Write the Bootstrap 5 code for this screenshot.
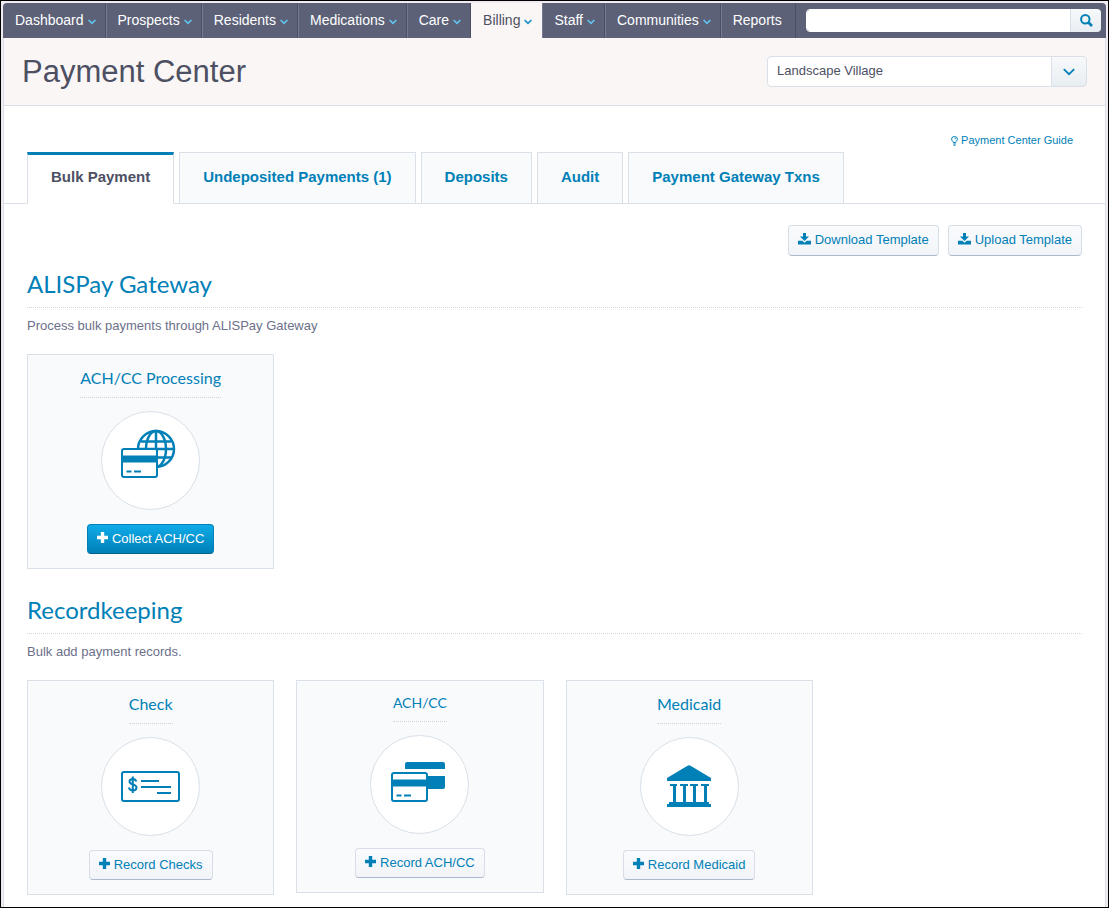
<!DOCTYPE html>
<html lang="en">
<head>
<meta charset="utf-8">
<meta name="viewport" content="width=device-width, initial-scale=1">
<title>Payment Center</title>
<link href="https://cdn.jsdelivr.net/npm/bootstrap@5.3.0/dist/css/bootstrap.min.css" rel="stylesheet">
<style>
:root { --ink:#4d5063; --blue:#0080b7; --line:#d9e0e8; --bar:#5c6178; }
body { font-family:"Liberation Sans", Arial, sans-serif; font-size:13px; line-height:20px; color:#6c708a; }
a { color:var(--blue); text-decoration:none; }
.frame { min-height:100vh; border:1px solid #000; padding:2px 2px 0; background:#f1ecf2; }
.panel { flex:1; background:#fff; border-right:1px solid var(--line); border-left:1px solid var(--line); border-radius:4px 4px 0 0; }
.mainbar { margin:0 -1px; background:var(--bar); border-radius:4px 4px 0 0; min-height:35px; }
.mainbar .menu-link { display:flex; align-items:center; gap:4px; height:35px; padding:0 9px 2px 11px; font-size:14px; color:#fff; border-right:1px solid #4b4f64; border-left:1px solid #737990; white-space:nowrap; }
.mainbar li:first-child .menu-link { border-left-color:transparent; }
.mainbar li:last-child .menu-link { padding-right:13px; }
.menu-link svg { fill:none; stroke:#62c4f0; stroke-width:1.600; margin-top:4px; }
.mainbar .menu-link.active { background:#faf6f5; color:var(--ink); border-color:#faf6f5; }
.menu-link.active svg { stroke:#1590c6; }
.search { margin:6px 5px 6px 10px; flex:1; height:23px; }
.search input { min-height:0; height:23px; padding:0 8px; border:1px solid #fff; border-radius:4px; font-size:13px; }
.search button { width:31px; height:23px; padding:0; line-height:0; background:linear-gradient(#f7f9fb,#e9eef2); border:0; border-left:1px solid var(--line); border-radius:4px; }
.pagehead { background:#faf6f5; border-bottom:1px solid var(--line); padding:0 18px; height:68px; }
.pagehead h1 { font-size:31px; line-height:40px; color:var(--ink); font-weight:400; }
.picker { width:320px; height:31px; }
.picker select { height:31px; padding:0 9px 2px; font-size:13px; color:var(--ink); border:1px solid var(--line); border-radius:4px; background-image:none; }
.picker label { width:36px; padding:0; justify-content:center; background:linear-gradient(#f7f9fb,#e9eef2); border:1px solid var(--line); border-radius:4px; }
.guide { padding:24px 32px 2px; font-size:11px; }
.tabs { gap:5px; padding:0 23px; border-bottom:1px solid var(--line); }
.tabs button { height:52px; margin-bottom:-1px; padding:0 23px 3px; border:1px solid var(--line); background:#f8fafc; color:var(--blue); font-size:15px; font-weight:700; white-space:nowrap; }
.tabs button.active { background:#fff; color:var(--ink); border-top:3px solid var(--blue); border-bottom-color:#fff; padding-bottom:5px; }
.content { padding:21px 23px 12px; }
.btn-soft, .btn-go { display:inline-flex; align-items:center; gap:4px; height:30px; padding:0 9px 1px; font-size:13px; line-height:20px; border-radius:4px; }
.btn-soft { color:var(--blue); background:linear-gradient(#fafbfd,#f2f4f8); border:1px solid #d7dee8; border-bottom-color:#adb9cc; }
.btn-soft:hover { color:#00618c; background:#eef2f6; }
.btn-go { color:#fff; background:linear-gradient(#0fabe8,#0080b8); border:1px solid #0080b7; border-bottom-color:#00618c; }
.btn-go:hover { color:#fff; background:#0080b7; }
.btn-soft svg, .btn-go svg { fill:currentColor; margin-top:-3px; }
.tools { gap:9px; }
.tools .btn-soft { height:31px; }
.section-title { font-family:Lato, sans-serif; font-size:24px; line-height:28px; color:var(--blue); font-weight:400; padding-bottom:9px; margin:14px 0 8px; border-bottom:1px dotted #d3d6da; }
.records .section-title { margin-top:27px; }
.summary { margin-bottom:18px; }
.tiles { --bs-gutter-x:22px; }
.tile { border:1px solid var(--line); background:#f8fafc; padding:13px 10px 14px; text-align:center; }
.tile h3 { display:inline-block; font-family:Lato, sans-serif; font-size:16px; line-height:20px; color:var(--blue); font-weight:400; padding-bottom:9px; margin:0 0 13px; border-bottom:1px dotted #cfd3d8; vertical-align:top; }
.tile h3.compact { font-size:14px; line-height:18px; }
.disc { width:99px; height:99px; margin:0 auto 14px; border:1px solid var(--line); border-radius:50%; background:#fff; }
.disc svg { display:block; fill:none; stroke:var(--blue); }
</style>
</head>
<body>
<svg class="d-none" aria-hidden="true">
  <symbol id="chev" viewBox="0 0 8 6"><path d="M.6 1 4 4.400 7.400 1"/></symbol>
  <symbol id="plus" viewBox="0 0 11 11"><path d="M3.800 0h3.400v3.800H11v3.400H7.200V11H3.800V7.200H0V3.800h3.800z"/></symbol>
  <symbol id="tray" viewBox="0 0 13 12"><path d="M5 0h3v3.500h3L6.500 8 2 3.500h3zM0 7.800h4.300L6.500 9.800 8.700 7.800H13V11.500H0z"/></symbol>
  <symbol id="cardfront" viewBox="0 0 38 31"><rect x="1" y="1" width="35" height="28" rx="2" fill="#fff" stroke-width="2"/><path d="M1 11h35" stroke-width="7"/><path d="M5.500 23.500h5M13 23.500h7" stroke-width="2"/></symbol>
</svg>

<div class="frame d-flex flex-column">
<div class="panel d-flex flex-column">
  <nav class="mainbar d-flex" aria-label="Main">
    <ul class="list-unstyled d-flex mb-0">
      <li><a class="menu-link" href="#">Dashboard <svg width="8" height="6"><use href="#chev"/></svg></a></li>
      <li><a class="menu-link" href="#">Prospects <svg width="8" height="6"><use href="#chev"/></svg></a></li>
      <li><a class="menu-link" href="#">Residents <svg width="8" height="6"><use href="#chev"/></svg></a></li>
      <li><a class="menu-link" href="#">Medications <svg width="8" height="6"><use href="#chev"/></svg></a></li>
      <li><a class="menu-link" href="#">Care <svg width="8" height="6"><use href="#chev"/></svg></a></li>
      <li><a class="menu-link active" href="#" aria-current="page">Billing <svg width="8" height="6"><use href="#chev"/></svg></a></li>
      <li><a class="menu-link" href="#">Staff <svg width="8" height="6"><use href="#chev"/></svg></a></li>
      <li><a class="menu-link" href="#">Communities <svg width="8" height="6"><use href="#chev"/></svg></a></li>
      <li><a class="menu-link" href="#">Reports</a></li>
    </ul>
    <form class="search input-group flex-nowrap w-auto" role="search">
      <input class="form-control" type="search" aria-label="Search">
      <button class="btn" type="button" aria-label="Search"><svg width="13" height="13" viewBox="0 0 13 13" fill="none" stroke="#0080b7"><circle cx="5.300" cy="5.300" r="4.200" stroke-width="2"/><path d="M8.500 8.500 12 12" stroke-width="2.600"/></svg></button>
    </form>
  </nav>

  <header class="pagehead d-flex justify-content-between align-items-center">
    <h1 class="mb-0">Payment Center</h1>
    <div class="picker input-group flex-nowrap">
      <select class="form-select" id="community" aria-label="Community"><option>Landscape Village</option></select>
      <label class="input-group-text" for="community"><svg width="12" height="8" viewBox="0 0 12 8" fill="none" stroke="#0080b7" stroke-width="1.800"><path d="M.8 1.200 6 6.200 11.200 1.200"/></svg></label>
    </div>
  </header>

  <div class="guide text-end"><a href="#"><svg width="7" height="10" viewBox="0 0 7 10" fill="none" stroke="#0080b7"><path d="M2.300 6.500C2.300 5.200.6 4.700.6 3a2.900 2.500 0 0 1 5.800 0c0 1.700-1.700 2.200-1.700 3.500zM2.200 8h2.600M2.700 9.400h1.600M3.500 2.100c.7 0 1.200.3 1.200 1"/></svg> Payment Center Guide</a></div>

  <div class="tabs d-flex" role="tablist">
    <button type="button" role="tab" class="active" aria-selected="true">Bulk Payment</button>
    <button type="button" role="tab" aria-selected="false">Undeposited Payments (1)</button>
    <button type="button" role="tab" aria-selected="false">Deposits</button>
    <button type="button" role="tab" aria-selected="false">Audit</button>
    <button type="button" role="tab" aria-selected="false">Payment Gateway Txns</button>
  </div>

  <main class="content">
    <div class="tools d-flex justify-content-end">
      <button type="button" class="btn btn-soft"><svg width="13" height="12"><use href="#tray"/></svg>Download Template</button>
      <button type="button" class="btn btn-soft"><svg width="13" height="12"><use href="#tray"/></svg>Upload Template</button>
    </div>

    <section>
      <h2 class="section-title">ALISPay Gateway</h2>
      <p class="summary">Process bulk payments through ALISPay Gateway</p>
      <div class="tiles row row-cols-4">
        <div class="col"><div class="tile">
          <h3>ACH/CC Processing</h3>
          <div class="disc"><svg width="97" height="97" viewBox="0 0 97 97">
            <g stroke-width="2.500"><circle cx="54" cy="37" r="18"/><ellipse cx="54" cy="37" rx="10" ry="18"/><path d="M54 19v36M39 29.500h30M36 37h36M39 45.500h30"/></g>
            <use href="#cardfront" x="19" y="36" width="38" height="31"/></svg></div>
          <button type="button" class="btn btn-go"><svg width="11" height="11"><use href="#plus"/></svg>Collect ACH/CC</button>
        </div></div>
      </div>
    </section>

    <section class="records">
      <h2 class="section-title">Recordkeeping</h2>
      <p class="summary">Bulk add payment records.</p>
      <div class="tiles row row-cols-4 align-items-start">
        <div class="col"><div class="tile">
          <h3>Check</h3>
          <div class="disc"><svg width="97" height="97" viewBox="0 0 97 97">
            <rect x="20" y="34" width="57" height="29" rx="2" stroke-width="2"/>
            <path d="M34.300 43.500c-.5-1.900-1.700-2.600-3.500-2.600-2 0-3.300 1-3.300 2.600 0 3.800 7 2 7 6 0 1.800-1.500 2.900-3.700 2.900-2.100 0-3.500-1-4-2.900M30.800 38.500v16.500" stroke-width="2"/>
            <path d="M39 43h18M39 49h30M55 55h14" stroke-width="2"/></svg></div>
          <button type="button" class="btn btn-soft"><svg width="11" height="11"><use href="#plus"/></svg>Record Checks</button>
        </div></div>
        <div class="col"><div class="tile">
          <h3 class="compact">ACH/CC</h3>
          <div class="disc"><svg width="97" height="97" viewBox="0 0 97 97">
            <path d="M34 33v-5q0-2 2-2h36q2 0 2 2v5zM56 40h18v11q0 2-2 2H56z" fill="#0080b7" stroke="none"/>
            <use href="#cardfront" x="20" y="36" width="38" height="31"/></svg></div>
          <button type="button" class="btn btn-soft"><svg width="11" height="11"><use href="#plus"/></svg>Record ACH/CC</button>
        </div></div>
        <div class="col"><div class="tile">
          <h3>Medicaid</h3>
          <div class="disc"><svg width="97" height="97" viewBox="0 0 97 97">
            <g fill="#0080b7" stroke="none"><path d="M26 43v-3L46.500 27.700q1.500-.8 3 0L70 40v3zM26 69v-3h2v-2h40v2h2v3z"/>
            <path d="M29 46h7v2h-1v16h-3V48h-3zM39 46h8v2h-2v16h-3V48h-3zM49 46h8v2h-2v16h-3V48h-3zM60 46h8v2h-2v16h-3V48h-3z"/></g></svg></div>
          <button type="button" class="btn btn-soft"><svg width="11" height="11"><use href="#plus"/></svg>Record Medicaid</button>
        </div></div>
      </div>
    </section>
  </main>
</div>
</div>
<script src="https://cdn.jsdelivr.net/npm/bootstrap@5.3.0/dist/js/bootstrap.bundle.min.js"></script>
</body>
</html>
